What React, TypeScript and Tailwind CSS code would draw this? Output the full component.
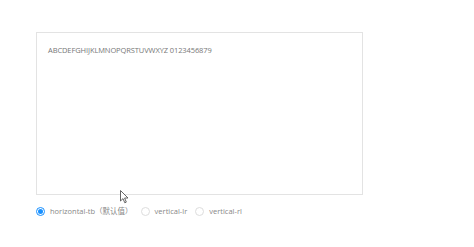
import { useState } from 'react';

const modes = [
  { value: 'horizontal-tb', label: 'horizontal-tb（默认值）' },
  { value: 'vertical-lr', label: 'vertical-lr' },
  { value: 'vertical-rl', label: 'vertical-rl' },
];

export default function App() {
  const [mode, setMode] = useState('horizontal-tb');

  return (
    <div
      className="relative w-[474px] h-[247px] bg-white pt-[32px] pl-[36px]"
      style={{ fontFamily: '"Open Sans", "Noto Sans CJK SC", sans-serif' }}
    >
      {/* Preview box */}
      <div className="w-[327px] h-[163px] border border-[#e3e3e3] px-[11px] pt-[11px]">
        <p className="text-[7.5px] leading-[12px] text-[#777] tracking-[-0.1px]">ABCDEFGHIJKLMNOPQRSTUVWXYZ 0123456879</p>
      </div>

      {/* Radios */}
      <div className="flex items-center mt-[10px] text-[7.5px] leading-[12px] text-[#888]">
        {modes.map((m, i) => {
          const checked = mode === m.value;
          return (
            <label
              key={m.value}
              onClick={() => setMode(m.value)}
              className={`flex items-center cursor-pointer ${i === 0 ? 'mr-[8px]' : 'mr-[8px]'}`}
            >
              <span
                className={`flex items-center justify-center w-[9px] h-[9px] rounded-full border mr-[5px] ${
                  checked ? 'border-[#1890ff]' : 'border-[#ddd]'
                }`}
              >
                {checked && <span className="w-[5px] h-[5px] rounded-full bg-[#1890ff]" />}
              </span>
              {m.label}
            </label>
          );
        })}
      </div>

      {/* Mouse cursor */}
      <svg className="absolute left-[120px] top-[190px]" width="9" height="14" viewBox="0 0 9 14">
        <path d="M0.5 0.5 L0.5 11 L3 8.6 L4.8 12.8 L6.3 12.1 L4.6 8 L8 8 Z" fill="#fff" stroke="#555" strokeWidth="0.9" strokeLinejoin="round" />
      </svg>
    </div>
  );
}
